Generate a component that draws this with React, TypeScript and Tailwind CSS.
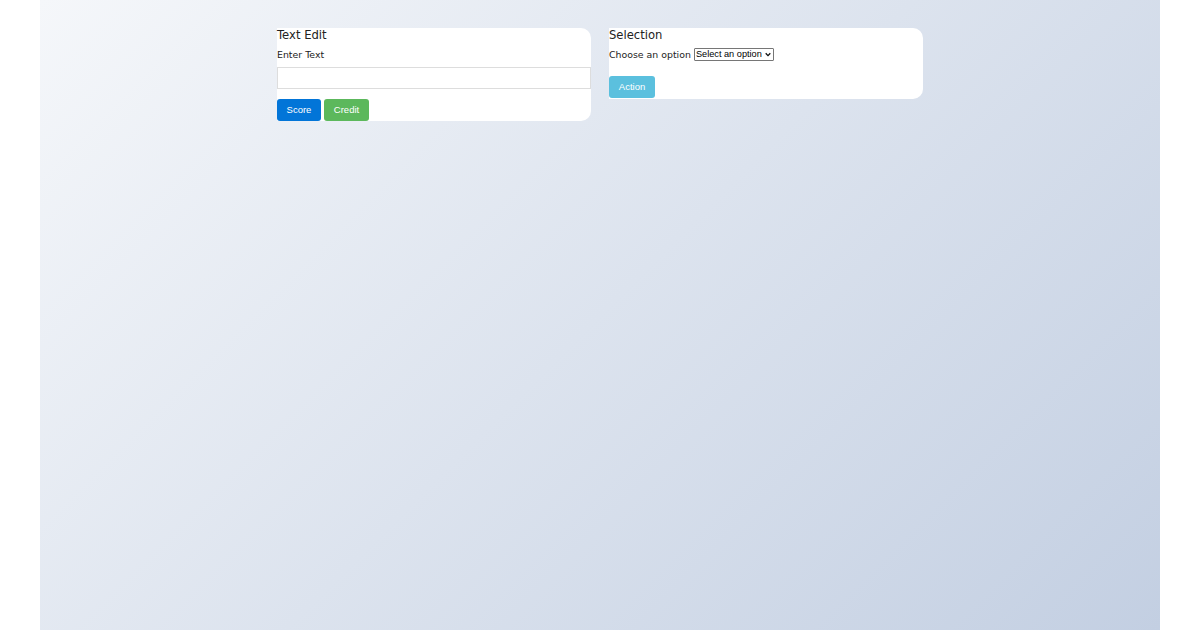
import { useState } from "react";

const App = () => {
  const [text, setText] = useState("");
  const [option, setOption] = useState("");

  return (
    <div className="bg-white w-[1200px] h-[630px]">
      <div className="mx-[40px] h-[630px] bg-[linear-gradient(135deg,#f5f7fa_0%,#c3cfe2_100%)] font-['DejaVu_Sans',sans-serif] text-[#222]">
        <div className="flex justify-center items-start gap-[18px] pt-[28px]">
          {/* Text edit card */}
          <div className="w-[314px] bg-white rounded-r-[10px] flex flex-col">
            <h2 className="text-[11.6px] leading-[15px] font-normal">Text Edit</h2>
            <label className="mt-[5px] text-[9.4px] leading-[13px]">Enter Text</label>
            <input
              value={text}
              onChange={(e) => setText(e.target.value)}
              className="mt-[6px] h-[22px] w-full border border-[#ddd] bg-white outline-none"
            />
            <div className="mt-[10px] flex gap-[3px]">
              <button className="h-[22px] w-[44px] rounded-[3px] bg-[#0275d8] text-white text-[9.5px] font-['Liberation_Sans',sans-serif]">
                Score
              </button>
              <button className="h-[22px] w-[45px] rounded-[3px] bg-[#5cb85c] text-white text-[9.5px] font-['Liberation_Sans',sans-serif]">
                Credit
              </button>
            </div>
          </div>

          {/* Selection card */}
          <div className="w-[314px] bg-white rounded-r-[10px] flex flex-col pb-[1px]">
            <h2 className="text-[11.6px] leading-[15px] font-normal">Selection</h2>
            <div className="mt-[5px] flex items-center gap-[3px] h-[13px]">
              <span className="text-[9.4px] leading-[13px]">Choose an option</span>
              <div className="relative h-[13px] w-[80px]">
                <select
                  value={option}
                  onChange={(e) => setOption(e.target.value)}
                  className="appearance-none block h-[13px] w-[80px] pl-[1px] pr-[10px] border border-[#767676] rounded-[1px] bg-white text-[9.2px] leading-[11px] text-black font-['Liberation_Sans',sans-serif] outline-none"
                >
                  <option value="">Select an option</option>
                  <option value="a">Option A</option>
                  <option value="b">Option B</option>
                </select>
                <svg
                  className="pointer-events-none absolute right-[3px] top-[4px]"
                  width="6"
                  height="5"
                  viewBox="0 0 6 5"
                  fill="none"
                >
                  <path d="M0.7 1.2 L3 3.6 L5.3 1.2" stroke="#111" strokeWidth="1.3" />
                </svg>
              </div>
            </div>
            <div className="mt-[12px]">
              <button className="h-[22px] w-[46px] rounded-[3px] bg-[#5bc0de] text-white text-[9.5px] font-['Liberation_Sans',sans-serif]">
                Action
              </button>
            </div>
          </div>
        </div>
      </div>
    </div>
  );
};

export default App;
